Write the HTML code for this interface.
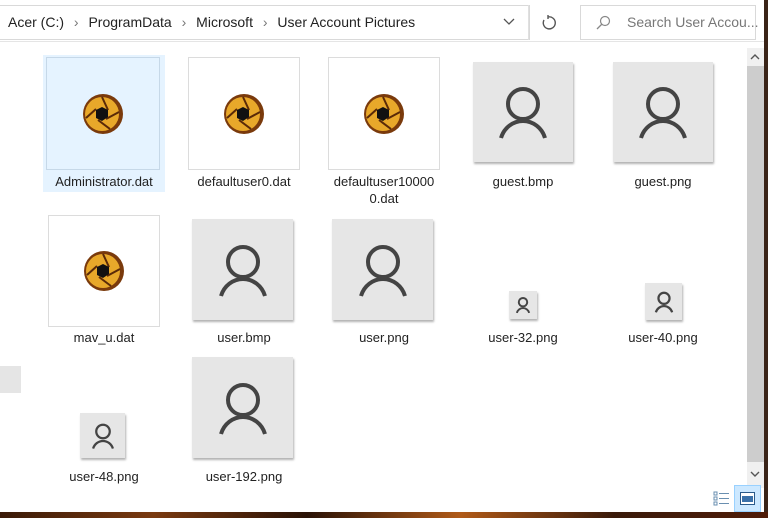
<!DOCTYPE html>
<html><head><meta charset="utf-8"><style>
*{margin:0;padding:0;box-sizing:border-box}
body{width:768px;height:518px;overflow:hidden;background:#fff;font-family:"Liberation Sans",sans-serif;position:relative;color:#1a1a1a}
.a{position:absolute}
.lbl{position:absolute;font-size:13px;text-align:center;width:130px;line-height:17px;color:#222}
.box{position:absolute;border:1px solid #dcdcdc;background:#fff}
.g{position:absolute;background:#e6e6e6;box-shadow:1px 2px 2px rgba(0,0,0,.3)}
.g svg,.box svg{position:absolute;left:50%;top:50%;transform:translate(-50%,-50%)}
</style></head><body>
<div class="a" style="left:0;top:0;width:768px;height:42px;background:#fff;border-bottom:1px solid #e5e5e5"></div>
<div class="a" style="left:0;top:5px;width:530px;height:35px;border:1px solid #d9d9d9;border-left:none"></div>
<div class="a" style="left:528px;top:5px;width:1px;height:35px;background:#e0e0e0"></div>
<div class="a" style="left:8px;top:14px;font-size:14px;color:#222;white-space:nowrap">Acer (C:) <span style="color:#777;margin:0 6px">&#8250;</span> ProgramData <span style="color:#777;margin:0 6px">&#8250;</span> Microsoft <span style="color:#777;margin:0 6px">&#8250;</span> User Account Pictures</div>
<svg class="a" style="left:503px;top:18px" width="12" height="8"><path d="M1 1 L6 6 L11 1" stroke="#555" fill="none" stroke-width="1.3"/></svg>
<svg class="a" style="left:540px;top:15px" width="16" height="16"><path d="M4 5 A6 6 0 1 0 8 2" stroke="#555" fill="none" stroke-width="1.4"/><path d="M8 0 L8 4" stroke="#555" stroke-width="1.4"/></svg>
<div class="a" style="left:580px;top:5px;width:176px;height:35px;border:1px solid #d9d9d9"></div>
<svg class="a" style="left:595px;top:15px" width="16" height="16"><circle cx="10" cy="6" r="4.5" stroke="#888" fill="none" stroke-width="1.2"/><path d="M7 9 L2 14" stroke="#888" stroke-width="1.3"/></svg>
<div class="a" style="left:627px;top:14px;font-size:14px;color:#777">Search User Accou...</div>
<div class="a" style="left:764px;top:0;width:4px;height:518px;background:#3a2418"></div>
<div class="a" style="left:0;top:366px;width:21px;height:27px;background:#e5e5e5"></div>
<div class="a" style="left:747px;top:48px;width:17px;height:440px;background:#f0f0f0"></div>
<div class="a" style="left:747px;top:66px;width:17px;height:396px;background:#cdcdcd"></div>
<svg class="a" style="left:750px;top:53px" width="10" height="8"><path d="M1 6 L5 2 L9 6" stroke="#555" fill="none" stroke-width="1.4"/></svg>
<svg class="a" style="left:750px;top:470px" width="10" height="8"><path d="M1 2 L5 6 L9 2" stroke="#555" fill="none" stroke-width="1.4"/></svg>
<svg class="a" style="left:713px;top:490px" width="18" height="16"><g stroke="#6a8fb0" stroke-width="1"><rect x="1" y="2" width="3" height="3" fill="none"/><rect x="1" y="7" width="3" height="3" fill="none"/><rect x="1" y="12" width="3" height="3" fill="none"/><path d="M6 3.5H16M6 8.5H16M6 13.5H16"/></g></svg>
<div class="a" style="left:734px;top:485px;width:27px;height:27px;background:#cce8ff;border:1px solid #99d1ff"></div>
<div class="a" style="left:740px;top:492px;width:15px;height:13px;background:#fff;border:1px solid #2a5a8a"><div style="margin:3px 1px;height:6px;background:#3a70a8"></div></div>
<div class="a" style="left:0;top:512px;width:768px;height:6px;background:linear-gradient(90deg,#3a1a08,#7a3a10 20%,#2a1206 40%,#b05a18 60%,#3a1a0a 80%,#501c08)"></div>

<div class="a" style="left:43px;top:55px;width:122px;height:137px;background:#e5f3ff"></div>
<div class="box" style="left:46px;top:57px;width:114px;height:113px;background:#e5f3ff;border-color:#c6d8e8"><svg width="44" height="44" viewBox="0 0 44 44"><circle cx="22" cy="22" r="20" fill="#7a3a0c"/><circle cx="21" cy="22" r="17" fill="#e8a82a"/><path d="M21 5 L27 18 M38 20 L25 27 M29 37 L17 28 M5 26 L15 17" stroke="#5a2a08" stroke-width="2"/><polygon points="21,15 27,18 27,25 21,29 15,26 15,18" fill="#111"/></svg></div>
<div class="box" style="left:188px;top:57px;width:112px;height:113px"><svg width="44" height="44" viewBox="0 0 44 44"><circle cx="22" cy="22" r="20" fill="#7a3a0c"/><circle cx="21" cy="22" r="17" fill="#e8a82a"/><path d="M21 5 L27 18 M38 20 L25 27 M29 37 L17 28 M5 26 L15 17" stroke="#5a2a08" stroke-width="2"/><polygon points="21,15 27,18 27,25 21,29 15,26 15,18" fill="#111"/></svg></div>
<div class="box" style="left:328px;top:57px;width:112px;height:113px"><svg width="44" height="44" viewBox="0 0 44 44"><circle cx="22" cy="22" r="20" fill="#7a3a0c"/><circle cx="21" cy="22" r="17" fill="#e8a82a"/><path d="M21 5 L27 18 M38 20 L25 27 M29 37 L17 28 M5 26 L15 17" stroke="#5a2a08" stroke-width="2"/><polygon points="21,15 27,18 27,25 21,29 15,26 15,18" fill="#111"/></svg></div>
<div class="box" style="left:48px;top:215px;width:112px;height:112px"><svg width="44" height="44" viewBox="0 0 44 44"><circle cx="22" cy="22" r="20" fill="#7a3a0c"/><circle cx="21" cy="22" r="17" fill="#e8a82a"/><path d="M21 5 L27 18 M38 20 L25 27 M29 37 L17 28 M5 26 L15 17" stroke="#5a2a08" stroke-width="2"/><polygon points="21,15 27,18 27,25 21,29 15,26 15,18" fill="#111"/></svg></div>

<div class="g" style="left:473px;top:62px;width:100px;height:100px"><svg width="100" height="100" viewBox="0 0 100 100"><circle cx="50" cy="42" r="15" stroke="#444" stroke-width="4" fill="none"/><path d="M28 76 A23 24 0 0 1 72 76" stroke="#444" stroke-width="4" fill="none"/></svg></div>
<div class="g" style="left:613px;top:62px;width:100px;height:100px"><svg width="100" height="100" viewBox="0 0 100 100"><circle cx="50" cy="42" r="15" stroke="#444" stroke-width="4" fill="none"/><path d="M28 76 A23 24 0 0 1 72 76" stroke="#444" stroke-width="4" fill="none"/></svg></div>
<div class="g" style="left:192px;top:219px;width:101px;height:101px"><svg width="100" height="100" viewBox="0 0 100 100"><circle cx="50" cy="42" r="15" stroke="#444" stroke-width="4" fill="none"/><path d="M28 76 A23 24 0 0 1 72 76" stroke="#444" stroke-width="4" fill="none"/></svg></div>
<div class="g" style="left:332px;top:219px;width:101px;height:101px"><svg width="100" height="100" viewBox="0 0 100 100"><circle cx="50" cy="42" r="15" stroke="#444" stroke-width="4" fill="none"/><path d="M28 76 A23 24 0 0 1 72 76" stroke="#444" stroke-width="4" fill="none"/></svg></div>
<div class="g" style="left:509px;top:291px;width:28px;height:28px"><svg width="28" height="28" viewBox="0 0 100 100"><circle cx="50" cy="40" r="15" stroke="#444" stroke-width="7" fill="none"/><path d="M28 78 A23 24 0 0 1 72 78" stroke="#444" stroke-width="7" fill="none"/></svg></div>
<div class="g" style="left:645px;top:283px;width:37px;height:37px"><svg width="37" height="37" viewBox="0 0 100 100"><circle cx="50" cy="40" r="15" stroke="#444" stroke-width="6" fill="none"/><path d="M28 78 A23 24 0 0 1 72 78" stroke="#444" stroke-width="6" fill="none"/></svg></div>
<div class="g" style="left:80px;top:413px;width:45px;height:45px"><svg width="45" height="45" viewBox="0 0 100 100"><circle cx="50" cy="40" r="15" stroke="#444" stroke-width="5" fill="none"/><path d="M28 78 A23 24 0 0 1 72 78" stroke="#444" stroke-width="5" fill="none"/></svg></div>
<div class="g" style="left:192px;top:357px;width:101px;height:101px"><svg width="100" height="100" viewBox="0 0 100 100"><circle cx="50" cy="42" r="15" stroke="#444" stroke-width="4" fill="none"/><path d="M28 76 A23 24 0 0 1 72 76" stroke="#444" stroke-width="4" fill="none"/></svg></div>

<div class="lbl" style="left:39px;top:173px">Administrator.dat</div>
<div class="lbl" style="left:179px;top:173px">defaultuser0.dat</div>
<div class="lbl" style="left:319px;top:173px">defaultuser10000<br>0.dat</div>
<div class="lbl" style="left:458px;top:173px">guest.bmp</div>
<div class="lbl" style="left:598px;top:173px">guest.png</div>
<div class="lbl" style="left:39px;top:329px">mav_u.dat</div>
<div class="lbl" style="left:179px;top:329px">user.bmp</div>
<div class="lbl" style="left:319px;top:329px">user.png</div>
<div class="lbl" style="left:458px;top:329px">user-32.png</div>
<div class="lbl" style="left:598px;top:329px">user-40.png</div>
<div class="lbl" style="left:39px;top:468px">user-48.png</div>
<div class="lbl" style="left:179px;top:468px">user-192.png</div>
</body></html>
